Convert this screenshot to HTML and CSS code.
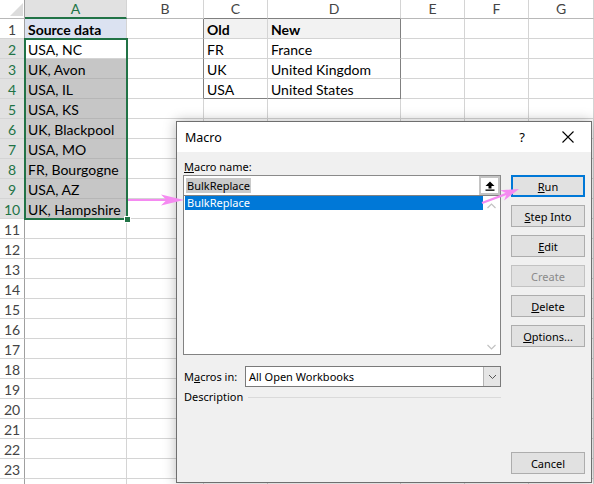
FILE: index.html
```html
<!DOCTYPE html>
<html>
<head>
<meta charset="utf-8">
<link rel="stylesheet" href="styles.css">
</head>
<body>
<div class="wrap">
  <div class="sheet">
    <div class="ch corner"><span class="tri"></span></div><div class="ch hi">A</div><div class="ch">B</div><div class="ch kb">C</div><div class="ch kb">D</div><div class="ch">E</div><div class="ch">F</div><div class="ch">G</div>
    <div class="rh">1</div><div class="b src">Source data</div><div class="kr"></div><div class="b hd">Old</div><div class="b hd kr">New</div><div></div><div></div><div></div>
    <div class="rh hi">2</div><div>USA, NC</div><div class="kr"></div><div>FR</div><div class="kr">France</div><div></div><div></div><div></div>
    <div class="rh hi">3</div><div class="gr">UK, Avon</div><div class="kr"></div><div>UK</div><div class="kr">United Kingdom</div><div></div><div></div><div></div>
    <div class="rh hi">4</div><div class="gr">USA, IL</div><div class="kr"></div><div class="kb">USA</div><div class="kr kb">United States</div><div></div><div></div><div></div>
    <div class="rh hi">5</div><div class="gr">USA, KS</div><div></div><div></div><div></div><div></div><div></div><div></div>
    <div class="rh hi">6</div><div class="gr">UK, Blackpool</div><div></div><div></div><div></div><div></div><div></div><div></div>
    <div class="rh hi">7</div><div class="gr">USA, MO</div><div></div><div></div><div></div><div></div><div></div><div></div>
    <div class="rh hi">8</div><div class="gr">FR, Bourgogne</div><div></div><div></div><div></div><div></div><div></div><div></div>
    <div class="rh hi">9</div><div class="gr">USA, AZ</div><div></div><div></div><div></div><div></div><div></div><div></div>
    <div class="rh hi">10</div><div class="gr">UK, Hampshire</div><div></div><div></div><div></div><div></div><div></div><div></div>
    <div class="rh">11</div><div></div><div></div><div></div><div></div><div></div><div></div><div></div>
    <div class="rh">12</div><div></div><div></div><div></div><div></div><div></div><div></div><div></div>
    <div class="rh">13</div><div></div><div></div><div></div><div></div><div></div><div></div><div></div>
    <div class="rh">14</div><div></div><div></div><div></div><div></div><div></div><div></div><div></div>
    <div class="rh">15</div><div></div><div></div><div></div><div></div><div></div><div></div><div></div>
    <div class="rh">16</div><div></div><div></div><div></div><div></div><div></div><div></div><div></div>
    <div class="rh">17</div><div></div><div></div><div></div><div></div><div></div><div></div><div></div>
    <div class="rh">18</div><div></div><div></div><div></div><div></div><div></div><div></div><div></div>
    <div class="rh">19</div><div></div><div></div><div></div><div></div><div></div><div></div><div></div>
    <div class="rh">20</div><div></div><div></div><div></div><div></div><div></div><div></div><div></div>
    <div class="rh">21</div><div></div><div></div><div></div><div></div><div></div><div></div><div></div>
    <div class="rh">22</div><div></div><div></div><div></div><div></div><div></div><div></div><div></div>
    <div class="rh">23</div><div></div><div></div><div></div><div></div><div></div><div></div><div></div>
    <div class="rh"></div><div></div><div></div><div></div><div></div><div></div><div></div><div></div>
  </div>
  <div class="selbox"><span class="handle"></span></div>

  <div class="dialog">
    <div class="titlebar">
      <span class="title">Macro</span>
      <span class="tbtn help">?</span>
      <span class="tbtn"><svg width="12" height="12" viewBox="0 0 12 12"><path d="M0.5 0.5 L11.5 11.5 M11.5 0.5 L0.5 11.5" stroke="#000" stroke-width="1.1" fill="none"/></svg></span>
    </div>
    <div class="dbody">
      <div class="left">
        <div class="lbl"><u>M</u>acro name:</div>
        <div class="namebox">
          <span class="seltext">BulkReplace</span>
          <span class="upbtn"><svg width="10" height="10" viewBox="0 0 10 10"><path d="M5 0.5 L9.5 5 L6.5 5 L6.5 7.5 L3.5 7.5 L3.5 5 L0.5 5 Z" fill="#000"/><rect x="0.5" y="8.5" width="9" height="1.3" fill="#000"/></svg></span>
        </div>
        <div class="list">
          <div class="items"><div class="item on">BulkReplace</div></div>
          <div class="vscroll">
            <svg width="9" height="6" viewBox="0 0 9 6"><path d="M0.5 5 L4.5 1 L8.5 5" stroke="#c2c2c2" stroke-width="1.2" fill="none"/></svg>
            <svg width="9" height="6" viewBox="0 0 9 6"><path d="M0.5 1 L4.5 5 L8.5 1" stroke="#c2c2c2" stroke-width="1.2" fill="none"/></svg>
          </div>
        </div>
        <div class="inrow">
          <span class="inlbl">M<u>a</u>cros in:</span>
          <div class="combo">
            <span class="ctext">All Open Workbooks</span>
            <span class="drop"><svg width="9" height="6" viewBox="0 0 9 6"><path d="M1 1 L4.5 4.5 L8 1" stroke="#555" stroke-width="1" fill="none"/></svg></span>
          </div>
        </div>
        <div class="descrow"><span>Description</span><span class="rule"></span></div>
      </div>
      <div class="right">
        <div class="btn def"><span><u>R</u>un</span></div>
        <div class="btn"><span><u>S</u>tep Into</span></div>
        <div class="btn"><span><u>E</u>dit</span></div>
        <div class="btn dis"><span>Create</span></div>
        <div class="btn"><span><u>D</u>elete</span></div>
        <div class="btn"><span><u>O</u>ptions...</span></div>
        <div class="btn cancel"><span>Cancel</span></div>
      </div>
    </div>
  </div>

  <svg class="arrows" width="594" height="484" viewBox="0 0 594 484">
    <line x1="128" y1="200" x2="168" y2="200" stroke="#f58af1" stroke-width="2.2"/>
    <path d="M161 194.5 L184 200 L161 205.5 L166.5 200 Z" fill="#f58af1"/>
    <line x1="482" y1="203" x2="507" y2="193.6" stroke="#f58af1" stroke-width="2.2"/>
    <path d="M519 189 L504.1 200.5 L506.9 193.6 L500.2 190.3 Z" fill="#f58af1"/>
  </svg>
</div>
</body>
</html>
```
FILE: styles.css
```css
* { box-sizing: border-box; }
html, body { margin: 0; padding: 0; }
body { width: 594px; height: 484px; overflow: hidden; background: #fff; }

.wrap { position: relative; width: 594px; height: 484px; overflow: hidden; font-family: Lato, "Liberation Sans", sans-serif; }

.sheet {
  display: grid;
  grid-template-columns: 25px 102px 77px 64px 133px 64px 64px 65px;
  grid-template-rows: 19px;
  grid-auto-rows: 20px;
  font-size: 14px;
  color: #000;
}
.sheet > div {
  border-right: 1px solid #d4d4d4;
  border-bottom: 1px solid #d4d4d4;
  padding: 1px 3px 0;
  line-height: 19px;
  white-space: nowrap;
  overflow: hidden;
}
.sheet > .ch { text-align: center; color: #444; line-height: 18px; padding-top: 0; border-bottom-color: #b8b8b8; }
.sheet > .rh { text-align: center; color: #444; padding: 1px 0 0; border-right-color: #a0a0a0; }
.sheet > .ch.hi { background: #e1e1e1; color: #217346; border-bottom: 2px solid #217346; }
.sheet > .rh.hi { background: #e1e1e1; color: #217346; }
.sheet > .corner { display: flex; align-items: flex-end; justify-content: flex-end; padding: 0 1px 2px 0; border-right-color: #a0a0a0; }
.tri { width: 13px; height: 13px; background: #dcdcdc; clip-path: polygon(100% 0, 100% 100%, 0 100%); }

.sheet > .b { font-weight: 700; }
.sheet > .src { background: #dbe2f1; }
.sheet > .hd { background: #f2f2f2; }
.sheet > .gr { background: #c6c6c6; border-bottom-color: #b6b6b6; }
.sheet > .kr { border-right-color: #808080; }
.sheet > .kb { border-bottom-color: #808080; }

.selbox { position: absolute; left: 24px; top: 38px; width: 104px; height: 182px; border: 2px solid #217346; }
.handle { position: absolute; right: -5px; bottom: -5px; width: 7px; height: 7px; background: #217346; border: 1px solid #fff; }

.dialog {
  position: absolute; left: 176px; top: 121px; width: 416px; height: 362px;
  border: 1px solid #6f6f6f; background: #f0f0f0;
  box-shadow: 0 0 12px rgba(0,0,0,0.28);
  font-family: "Noto Sans", "Open Sans", sans-serif; font-size: 11px; color: #000;
  display: flex; flex-direction: column;
}
.titlebar { height: 30px; background: #fff; display: flex; align-items: center; padding-left: 8px; }
.title { flex: 1; font-size: 12.5px; }
.tbtn { width: 46px; height: 30px; display: flex; align-items: center; justify-content: center; }
.help { font-size: 13px; }

.dbody { flex: 1; display: flex; gap: 10px; padding: 7px 6px 8px 6px; }
.left { width: 318px; display: flex; flex-direction: column; }
.right { width: 74px; display: flex; flex-direction: column; gap: 8px; padding-top: 16px; }

.lbl { line-height: 16px; padding-left: 1px; }
.namebox { height: 20px; border: 1px solid #8a8a8a; border-bottom: none; background: #fff; display: flex; align-items: center; padding-left: 2px; }
.seltext { background: #cacaca; line-height: 15px; padding: 0 1px; }
.upbtn { margin-left: auto; width: 21px; height: 19px; border: 2px solid #c4c4c4; background: #fff; display: flex; align-items: center; justify-content: center; }

.list { height: 160px; border: 1px solid #828282; background: #fff; display: flex; }
.items { flex: 1; padding-left: 1px; }
.item { height: 14px; line-height: 14px; padding-left: 2px; }
.item.on { background: #0078d7; color: #fff; }
.vscroll { width: 17px; display: flex; flex-direction: column; justify-content: space-between; align-items: center; padding: 7px 0 4px; }

.inrow { display: flex; align-items: center; margin-top: 11px; height: 21px; }
.inlbl { width: 62px; padding-left: 1px; }
.combo { width: 256px; height: 21px; border: 1px solid #7a7a7a; background: #fff; display: flex; align-items: center; }
.ctext { flex: 1; padding-left: 3px; }
.drop { width: 17px; height: 19px; background: #e5e5e5; border-left: 1px solid #b4b4b4; display: flex; align-items: center; justify-content: center; }

.descrow { display: flex; align-items: center; gap: 5px; margin-top: 2px; line-height: 16px; padding-left: 1px; }
.rule { flex: 1; height: 1px; background: #dadada; }

.btn { height: 22px; border: 1px solid #adadad; background: #e1e1e1; display: flex; align-items: center; justify-content: center; }
.btn.def { border: 2px solid #0078d7; }
.btn.dis { color: #8a8a8a; border-color: #c2c2c2; }
.btn.cancel { margin-top: auto; }

.arrows { position: absolute; left: 0; top: 0; pointer-events: none; }
```
